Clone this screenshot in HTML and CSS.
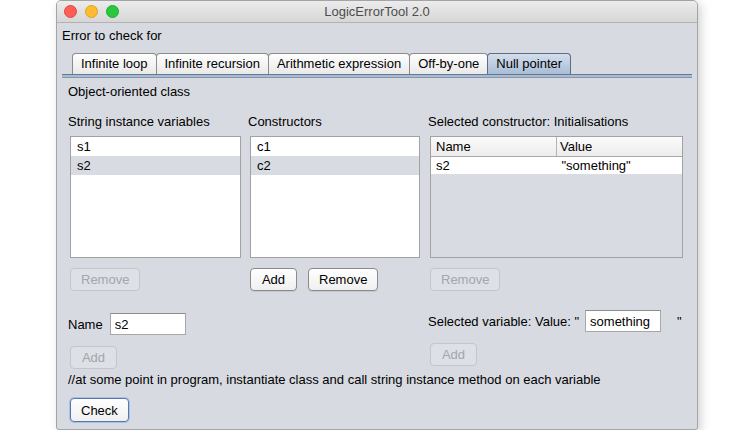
FILE: index.html
```html
<!DOCTYPE html>
<html lang="en">
<head>
    <meta charset="UTF-8">
    <title>LogicErrorTool 2.0</title>
    <link rel="stylesheet" href="styles.css">
</head>
<body>
    <div class="window">
        <div class="title-bar">
            <div class="lights">
                <span class="light red"></span>
                <span class="light yellow"></span>
                <span class="light green"></span>
            </div>
            <div class="title">LogicErrorTool 2.0</div>
            <div></div>
        </div>

        <div class="window-body">
            <div class="heading">Error to check for</div>

            <div class="tabs">
                <div class="tab">Infinite loop</div>
                <div class="tab">Infinite recursion</div>
                <div class="tab">Arithmetic expression</div>
                <div class="tab">Off-by-one</div>
                <div class="tab selected">Null pointer</div>
            </div>
            <div class="tab-rule"></div>

            <div class="tab-content">
                <div class="section-title">Object-oriented class</div>

                <div class="columns">
                    <div class="column">
                        <div class="col-label">String instance variables</div>
                        <div class="list list-vars">
                            <div class="list-item">s1</div>
                            <div class="list-item selected">s2</div>
                        </div>
                        <div class="button-row">
                            <button class="btn" disabled>Remove</button>
                        </div>
                    </div>

                    <div class="column">
                        <div class="col-label">Constructors</div>
                        <div class="list list-ctors">
                            <div class="list-item">c1</div>
                            <div class="list-item selected">c2</div>
                        </div>
                        <div class="button-row">
                            <button class="btn">Add</button>
                            <button class="btn">Remove</button>
                        </div>
                    </div>

                    <div class="column">
                        <div class="col-label">Selected constructor: Initialisations</div>
                        <div class="table-box">
                            <table class="init-table">
                                <thead>
                                    <tr><th class="col-name">Name</th><th>Value</th></tr>
                                </thead>
                                <tbody>
                                    <tr><td>s2</td><td>"something"</td></tr>
                                </tbody>
                            </table>
                        </div>
                        <div class="button-row">
                            <button class="btn" disabled>Remove</button>
                        </div>
                    </div>
                </div>

                <div class="form-row">
                    <div class="form-left">
                        <div class="field-row">
                            <span>Name</span>
                            <input class="text-field" type="text" value="s2">
                        </div>
                        <button class="btn btn-under" disabled>Add</button>
                    </div>
                    <div class="form-right">
                        <div class="field-row field-row-value">
                            <span>Selected variable: Value: "</span>
                            <input class="text-field" type="text" value="something">
                            <span class="close-quote">"</span>
                        </div>
                        <button class="btn btn-under" disabled>Add</button>
                    </div>
                </div>

                <div class="comment">//at some point in program, instantiate class and call string instance method on each variable</div>

                <button class="btn btn-check">Check</button>
            </div>
        </div>
    </div>
</body>
</html>
```

FILE: styles.css
```css
body {
    margin: 0;
    background-color: white;
    font-family: "Liberation Sans", Arial, sans-serif;
    font-size: 13px;
    color: black;
}

.window {
    margin-left: 56px;
    width: 642px;
    height: 430px;
    box-sizing: border-box;
    border: 1px solid #a4a4a4;
    border-radius: 5px 5px 3px 3px;
    background-color: #d7dae1;
    box-shadow: 3px 3px 10px rgba(0, 0, 0, 0.18);
    overflow: hidden;
}

.title-bar {
    height: 21px;
    border-bottom: 1px solid #b3b3b3;
    background: linear-gradient(#ececec, #d6d6d6);
    display: grid;
    grid-template-columns: 1fr auto 1fr;
    align-items: center;
}

.lights {
    display: flex;
    gap: 8px;
    padding-left: 7px;
}

.light {
    width: 11px;
    height: 11px;
    border-radius: 50%;
    display: inline-block;
}

.red {
    background-color: #fd5f57;
    border: 0.5px solid #e2463f;
}

.yellow {
    background-color: #febc2e;
    border: 0.5px solid #dfa023;
}

.green {
    background-color: #28c840;
    border: 0.5px solid #1bac2c;
}

.title {
    color: #4d4d4d;
    line-height: 16px;
}

.window-body {
    padding: 5px 5px 0 5px;
}

.heading {
    line-height: 16px;
}

.tabs {
    display: flex;
    margin-top: 9px;
    padding-left: 10px;
}

.tab {
    padding: 2px 8px;
    line-height: 16px;
    border: 1px solid #8c8c8c;
    border-bottom: none;
    border-radius: 4px 4px 0 0;
    background: linear-gradient(#fefefe, #e9e9e9);
}

.tab + .tab {
    margin-left: -1px;
}

.tab.selected {
    background: linear-gradient(#d3deec, #a9bdd6);
    border-color: #5d6e84;
}

.tab-rule {
    height: 2px;
    background-color: #a9bcd4;
    border-top: 1px solid #66788f;
    border-bottom: 1px solid #8696aa;
}

.tab-content {
    padding: 6px 6px 0 6px;
}

.section-title {
    line-height: 16px;
}

.columns {
    display: grid;
    grid-template-columns: 180px 180px 1fr;
    margin-top: 14px;
}

.col-label {
    line-height: 16px;
}

.list,
.table-box {
    margin: 6px 0 0 2px;
    height: 122px;
    box-sizing: border-box;
    border: 1px solid #a2a2a2;
}

.list {
    background-color: white;
}

.list-vars {
    width: 171px;
}

.list-ctors {
    width: 170px;
}

.list-item {
    line-height: 19px;
    padding-left: 6px;
}

.list-item.selected {
    background-color: #d8dbe2;
}

.table-box {
    width: 253px;
    background-color: #d8dbe1;
}

.init-table {
    width: 100%;
    border-collapse: collapse;
    font-size: 13px;
}

.init-table th {
    text-align: left;
    font-weight: normal;
    line-height: 19px;
    padding: 0 0 0 3px;
    background: linear-gradient(#fbfbfb, #ececec);
    border-bottom: 1px solid #a9a9a9;
}

.init-table th.col-name {
    width: 120px;
    padding-left: 5px;
    border-right: 1px solid #b4b4b4;
}

.init-table td {
    line-height: 17px;
    padding: 0 0 0 5px;
    background-color: white;
}

.button-row {
    display: flex;
    gap: 11px;
    margin: 10px 0 0 2px;
}

.btn {
    height: 23px;
    min-width: 47px;
    padding: 0 10px;
    font-family: "Liberation Sans", Arial, sans-serif;
    font-size: 13px;
    color: black;
    border: 1px solid #8a8a8a;
    border-radius: 4px;
    background: linear-gradient(#fefefe, #f0f0f0);
    box-shadow: 0 1px 0 rgba(0, 0, 0, 0.08);
}

.btn:disabled {
    color: #a3a6ab;
    border-color: #c4c6cb;
    background: #dde0e6;
    box-shadow: none;
}

.form-row {
    display: grid;
    grid-template-columns: 360px 1fr;
    margin-top: 19px;
}

.form-left {
    padding-top: 3px;
}

.field-row {
    display: flex;
    align-items: center;
    gap: 7px;
    height: 22px;
}

.field-row-value {
    gap: 6px;
}

.text-field {
    width: 76px;
    height: 22px;
    box-sizing: border-box;
    margin: 0;
    padding: 0 4px;
    font-family: "Liberation Sans", Arial, sans-serif;
    font-size: 13px;
    color: black;
    border: 1px solid #a7a7a7;
    border-top-color: #8d8d8d;
    background-color: white;
}

.close-quote {
    margin-left: 10px;
}

.btn-under {
    margin: 11px 0 0 2px;
}

.comment {
    line-height: 16px;
    margin-top: 3px;
}

.btn-check {
    height: 24px;
    margin: 10px 0 0 2px;
    border-color: #5879b0;
    box-shadow: 0 0 0 1px rgba(110, 160, 230, 0.45);
}
```
